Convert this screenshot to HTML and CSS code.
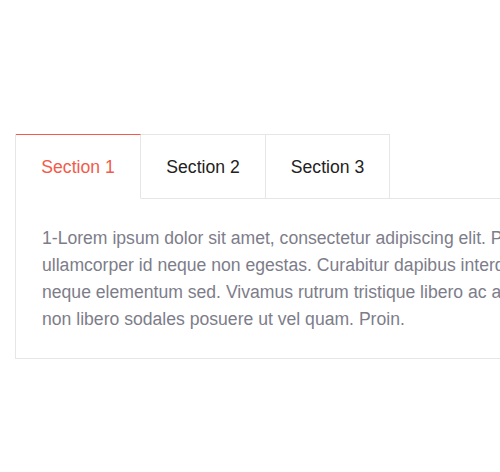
FILE: index.html
```html
<!DOCTYPE html>
<html lang="en">
<head>
    <meta charset="UTF-8">
    <meta name="viewport" content="width=device-width, initial-scale=1.0">
    <title>Tabs</title>
    <link rel="stylesheet" href="styles.css">
</head>
<body>
    <div class="tabs-container">
        <ul class="tabs-nav">
            <li class="tab active">Section 1</li>
            <li class="tab">Section 2</li>
            <li class="tab">Section 3</li>
            <li class="tab-fill"></li>
        </ul>
        <div class="tab-panel">
            <p>1-Lorem ipsum dolor sit amet, consectetur adipiscing elit. Praesent vitae ullamcorper id neque non egestas. Curabitur dapibus interdum nisl, a neque elementum sed. Vivamus rutrum tristique libero ac aliquet purus. non libero sodales posuere ut vel quam. Proin.</p>
        </div>
    </div>
</body>
</html>
```

FILE: styles.css
```css
body {
    font-family: "Liberation Sans", Arial, sans-serif;
    background: #fff;
    margin: 0;
    overflow: hidden;
}

.tabs-container {
    width: 620px;
    margin: 134px 0 0 15px;
    border: 1px solid #e6e6e6;
    border-top: none;
}

.tabs-nav {
    display: flex;
    list-style: none;
    margin: 0;
    padding: 0;
}

.tab {
    width: 125px;
    height: 65px;
    padding-top: 2px;
    box-sizing: border-box;
    line-height: 61px;
    text-align: center;
    font-size: 17.6px;
    color: #222;
    border-top: 1px solid #e6e6e6;
    border-right: 1px solid #e6e6e6;
    border-bottom: 1px solid #e6e6e6;
    cursor: pointer;
}

.tab:nth-child(3) {
    width: 124px;
}

.tab.active {
    color: #f25b4b;
    border-top-color: #f25b4b;
    border-bottom-color: transparent;
}

.tab-fill {
    flex: 1;
    border-bottom: 1px solid #e6e6e6;
}

.tab-panel {
    padding: 26px 26px 25px 26px;
}

.tab-panel p {
    margin: 0;
    font-size: 17.6px;
    line-height: 27px;
    color: #7d7d8a;
}
```
